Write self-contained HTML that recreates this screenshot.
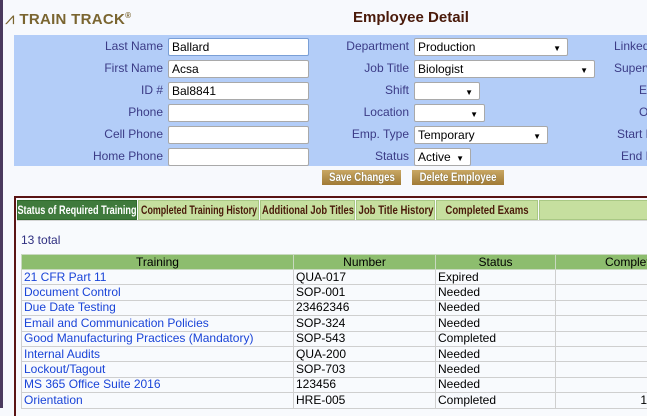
<!DOCTYPE html>
<html><head><style>
*{margin:0;padding:0;box-sizing:border-box}
body{width:647px;height:408px;overflow:hidden;position:relative;background:#f7f9fd;font-family:"Liberation Sans",Arial,sans-serif;font-size:12px}
.a{position:absolute;white-space:nowrap}
.lb{color:#3b3b86;text-align:right}
.in{position:absolute;background:#fff;border:1px solid #a9a9a9;border-radius:2px;height:18px;padding:1px 3px;color:#000;font-size:12px;line-height:14px;white-space:nowrap}
.sel:after{content:"▼";position:absolute;right:6px;top:3px;font-size:8px}
.btn{position:absolute;top:170px;height:15px;background:linear-gradient(#c9a764,#a07a35);color:#fff;font-weight:bold;font-size:12px;line-height:15px;white-space:nowrap;overflow:hidden;text-shadow:0 0 1px #553}
.tab{position:absolute;top:200px;height:20px;background:#c6df9f;border:1px solid #a9c884;color:#4a1a0a;font-weight:bold;line-height:18px;font-size:12px;white-space:nowrap;overflow:hidden}
.s{position:absolute;left:50%;top:0;transform:translateX(-50%) scaleX(0.8)}
table{position:absolute;left:21px;top:254px;border-collapse:collapse;width:650px;table-layout:fixed}
td{border:1px solid #cfcfcf;height:15.4px;padding:0 2px;line-height:13px;font-size:12px;white-space:nowrap;overflow:hidden}
th{background:#8dbd6e;border:1px solid #c9d9c0;font-weight:normal;height:15px;font-size:12px;line-height:13px;white-space:nowrap;overflow:hidden}
a{color:#1a44d8;text-decoration:none}
</style></head><body>
<div class="a" style="left:0;top:0;width:3px;height:408px;background:#4a3a5e"></div>
<div class="a" style="left:5px;top:9px;font-size:15px;font-weight:bold;color:#7a6530;letter-spacing:0.3px"><span style="font-size:17px;font-weight:normal">⩘</span> TRAIN TRACK<sup style="font-size:8px">®</sup></div>
<div class="a" style="left:353px;top:9px;font-size:15px;font-weight:bold;color:#4a1a0a">Employee Detail</div>
<div class="a" style="left:14px;top:35px;width:633px;height:131px;background:#b3cdf8"></div>

<div class="a lb" style="left:60px;width:103px;top:39px">Last Name</div>
<div class="a lb" style="left:60px;width:103px;top:61px">First Name</div>
<div class="a lb" style="left:60px;width:103px;top:83px">ID #</div>
<div class="a lb" style="left:60px;width:103px;top:105px">Phone</div>
<div class="a lb" style="left:60px;width:103px;top:127px">Cell Phone</div>
<div class="a lb" style="left:60px;width:103px;top:149px">Home Phone</div>
<div class="in" style="left:168px;top:38px;width:141px;border-color:#7a9fd6">Ballard</div>
<div class="in" style="left:168px;top:60px;width:141px">Acsa</div>
<div class="in" style="left:168px;top:82px;width:141px">Bal8841</div>
<div class="in" style="left:168px;top:104px;width:141px"></div>
<div class="in" style="left:168px;top:126px;width:141px"></div>
<div class="in" style="left:168px;top:148px;width:141px"></div>

<div class="a lb" style="left:320px;width:89px;top:39px">Department</div>
<div class="a lb" style="left:320px;width:89px;top:61px">Job Title</div>
<div class="a lb" style="left:320px;width:89px;top:83px">Shift</div>
<div class="a lb" style="left:320px;width:89px;top:105px">Location</div>
<div class="a lb" style="left:320px;width:89px;top:127px">Emp. Type</div>
<div class="a lb" style="left:320px;width:89px;top:149px">Status</div>
<div class="in sel" style="left:414px;top:38px;width:154px">Production</div>
<div class="in sel" style="left:414px;top:60px;width:181px">Biologist</div>
<div class="in sel" style="left:414px;top:82px;width:66px"></div>
<div class="in sel" style="left:414px;top:104px;width:71px"></div>
<div class="in sel" style="left:414px;top:126px;width:134px">Temporary</div>
<div class="in sel" style="left:414px;top:148px;width:57px">Active</div>

<div class="a lb" style="left:614px;top:39px">Linked</div>
<div class="a lb" style="left:614px;top:61px">Superv</div>
<div class="a lb" style="left:639px;top:83px">En</div>
<div class="a lb" style="left:639px;top:105px">O</div>
<div class="a lb" style="left:617px;top:127px">Start D</div>
<div class="a lb" style="left:621px;top:149px">End D</div>

<div class="btn" style="left:322px;width:79px"><span class="s">Save Changes</span></div>
<div class="btn" style="left:412px;width:92px"><span class="s">Delete Employee</span></div>

<div class="a" style="left:14px;top:196px;width:640px;height:220px;border:2px solid #5a1414;border-right:none;border-bottom:none;background:#f8fafd"></div>
<div class="tab" style="left:17px;width:120px;background:#3f7a3c;border-color:#2f6a2c;color:#fff"><span class="s" style="transform:translateX(-50%) scaleX(0.76)">Status of Required Training</span></div>
<div class="tab" style="left:138px;width:121px"><span class="s" style="transform:translateX(-50%) scaleX(0.74)">Completed Training History</span></div>
<div class="tab" style="left:260px;width:95px"><span class="s" style="transform:translateX(-50%) scaleX(0.78)">Additional Job Titles</span></div>
<div class="tab" style="left:356px;width:79px"><span class="s">Job Title History</span></div>
<div class="tab" style="left:436px;width:102px"><span class="s">Completed Exams</span></div>
<div class="tab" style="left:539px;width:120px"></div>
<div class="a" style="left:17px;top:220px;width:630px;height:1px;background:#d5d5d5"></div>
<div class="a" style="left:21px;top:233px;color:#2f2f80">13 total</div>

<table>
<colgroup><col style="width:272px"><col style="width:142px"><col style="width:120px"><col style="width:116px"></colgroup>
<tr><th>Training</th><th>Number</th><th>Status</th><th style="text-align:left;padding-left:49px">Complete</th></tr>
<tr><td><a>21 CFR Part 11</a></td><td>QUA-017</td><td>Expired</td><td></td></tr>
<tr><td><a>Document Control</a></td><td>SOP-001</td><td>Needed</td><td></td></tr>
<tr><td><a>Due Date Testing</a></td><td>23462346</td><td>Needed</td><td></td></tr>
<tr><td><a>Email and Communication Policies</a></td><td>SOP-324</td><td>Needed</td><td></td></tr>
<tr><td><a>Good Manufacturing Practices (Mandatory)</a></td><td>SOP-543</td><td>Completed</td><td></td></tr>
<tr><td><a>Internal Audits</a></td><td>QUA-200</td><td>Needed</td><td></td></tr>
<tr><td><a>Lockout/Tagout</a></td><td>SOP-703</td><td>Needed</td><td></td></tr>
<tr><td><a>MS 365 Office Suite 2016</a></td><td>123456</td><td>Needed</td><td></td></tr>
<tr><td><a>Orientation</a></td><td>HRE-005</td><td>Completed</td><td style="text-align:right;padding-right:24px">1</td></tr>
</table>
</body></html>
